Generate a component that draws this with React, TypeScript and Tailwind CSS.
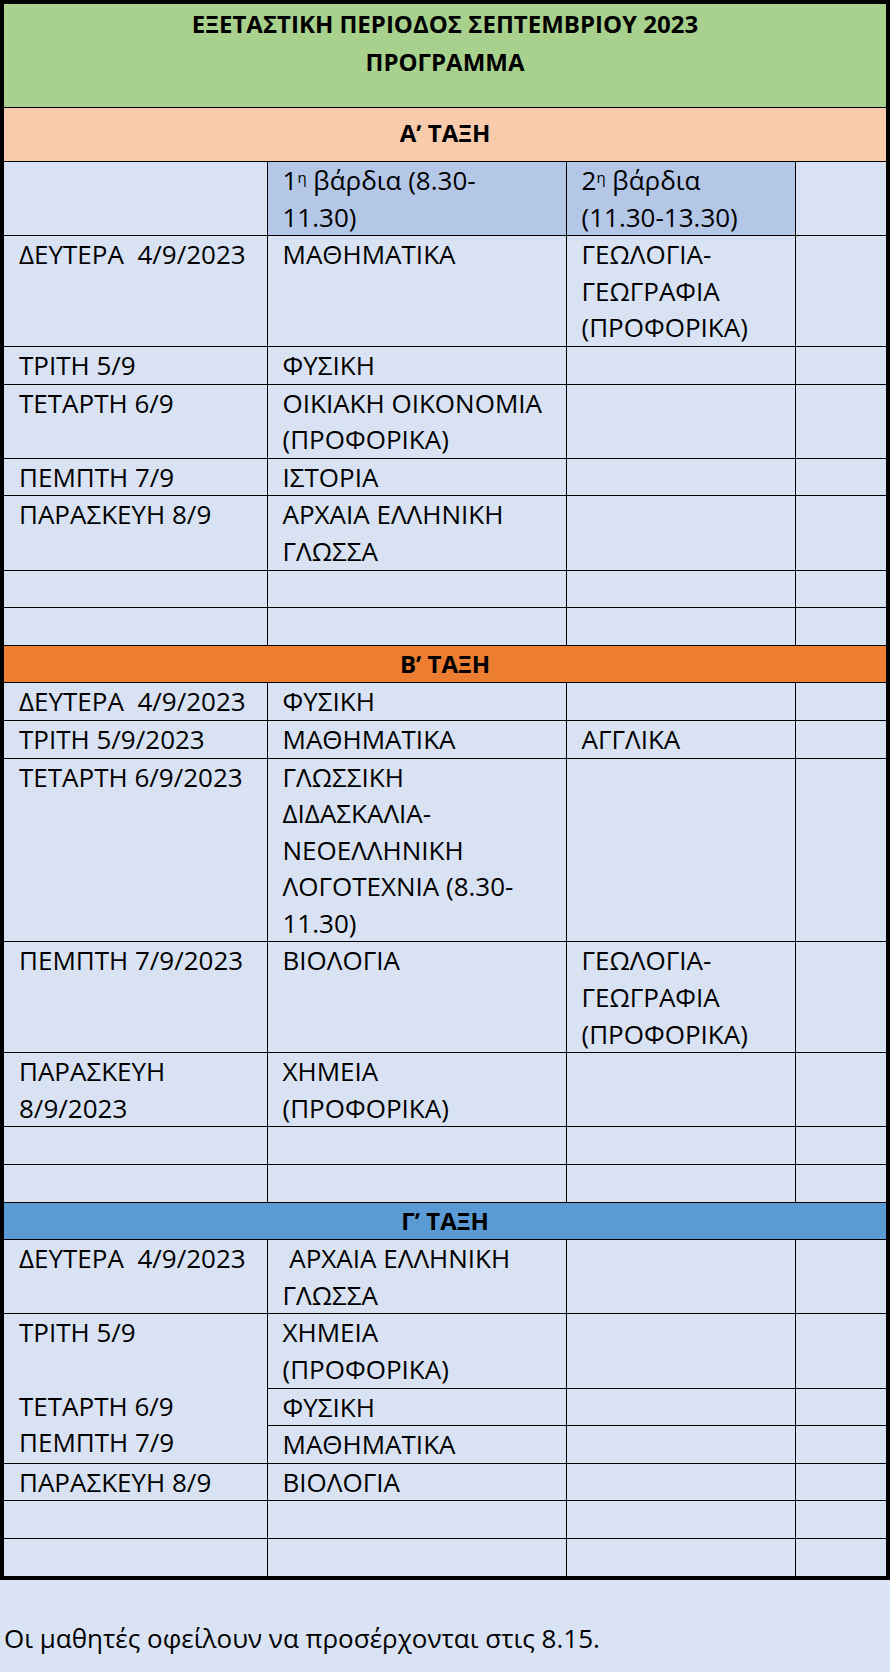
import React from "react";

type Row = {
  day?: string;
  subj?: string;
  second?: string;
  daySpan?: number;
  noDay?: boolean;
};

const sectionA: Row[] = [
  { day: "ΔΕΥΤΕΡΑ  4/9/2023", subj: "ΜΑΘΗΜΑΤΙΚΑ", second: "ΓΕΩΛΟΓΙΑ-\nΓΕΩΓΡΑΦΙΑ\n(ΠΡΟΦΟΡΙΚΑ)" },
  { day: "ΤΡΙΤΗ 5/9", subj: "ΦΥΣΙΚΗ" },
  { day: "ΤΕΤΑΡΤΗ 6/9", subj: "ΟΙΚΙΑΚΗ ΟΙΚΟΝΟΜΙΑ\n(ΠΡΟΦΟΡΙΚΑ)" },
  { day: "ΠΕΜΠΤΗ 7/9", subj: "ΙΣΤΟΡΙΑ" },
  { day: "ΠΑΡΑΣΚΕΥΗ 8/9", subj: "ΑΡΧΑΙΑ ΕΛΛΗΝΙΚΗ\nΓΛΩΣΣΑ" },
  {},
  {},
];

const sectionB: Row[] = [
  { day: "ΔΕΥΤΕΡΑ  4/9/2023", subj: "ΦΥΣΙΚΗ" },
  { day: "ΤΡΙΤΗ 5/9/2023", subj: "ΜΑΘΗΜΑΤΙΚΑ", second: "ΑΓΓΛΙΚΑ" },
  {
    day: "ΤΕΤΑΡΤΗ 6/9/2023",
    subj: "ΓΛΩΣΣΙΚΗ\nΔΙΔΑΣΚΑΛΙΑ-\nΝΕΟΕΛΛΗΝΙΚΗ\nΛΟΓΟΤΕΧΝΙΑ (8.30-\n11.30)",
  },
  { day: "ΠΕΜΠΤΗ 7/9/2023", subj: "ΒΙΟΛΟΓΙΑ", second: "ΓΕΩΛΟΓΙΑ-\nΓΕΩΓΡΑΦΙΑ\n(ΠΡΟΦΟΡΙΚΑ)" },
  { day: "ΠΑΡΑΣΚΕΥΗ\n8/9/2023", subj: "ΧΗΜΕΙΑ\n(ΠΡΟΦΟΡΙΚΑ)" },
  {},
  {},
];

const sectionC: Row[] = [
  { day: "ΔΕΥΤΕΡΑ  4/9/2023", subj: " ΑΡΧΑΙΑ ΕΛΛΗΝΙΚΗ\nΓΛΩΣΣΑ" },
  { day: "ΤΡΙΤΗ 5/9\n\nΤΕΤΑΡΤΗ 6/9\nΠΕΜΠΤΗ 7/9", daySpan: 3, subj: "ΧΗΜΕΙΑ\n(ΠΡΟΦΟΡΙΚΑ)" },
  { noDay: true, subj: "ΦΥΣΙΚΗ" },
  { noDay: true, subj: "ΜΑΘΗΜΑΤΙΚΑ" },
  { day: "ΠΑΡΑΣΚΕΥΗ 8/9", subj: "ΒΙΟΛΟΓΙΑ" },
  {},
  {},
];

const cell = "border border-black align-top bg-[#d9e2f3] p-0";

function Text({ children, className = "" }: { children?: React.ReactNode; className?: string }) {
  return <div className={`whitespace-pre leading-[36.6px] ${className}`}>{children || "\u00a0"}</div>;
}

function Section({ title, color, rows }: { title: string; color: string; rows: Row[] }) {
  return (
    <>
      <tr>
        <td colSpan={4} className={`border border-black p-0 text-center text-[24px] font-bold ${color}`}>
          <Text>{title}</Text>
        </td>
      </tr>
      {rows.map((r, i) => (
        <tr key={i}>
          {!r.noDay && (
            <td rowSpan={r.daySpan} className={cell}>
              <Text className="pl-[15px]">{r.day}</Text>
            </td>
          )}
          <td className={cell}>
            <Text className="pl-[15px]">{r.subj}</Text>
          </td>
          <td className={cell}>
            <Text className="pl-[15px]">{r.second}</Text>
          </td>
          <td className={cell} />
        </tr>
      ))}
    </>
  );
}

export default function App() {
  return (
    <div
      className="w-[890px] min-h-[1672px] bg-[#dae3f3] text-[26px] text-black"
      style={{ fontFamily: '"Open Sans", "Noto Sans", sans-serif' }}
    >
      <table className="w-[890px] table-fixed border-collapse border-[4px] border-black">
        <colgroup>
          <col className="w-[265px]" />
          <col className="w-[299px]" />
          <col className="w-[229px]" />
          <col />
        </colgroup>
        <tbody>
          <tr>
            <td colSpan={4} className="border border-black bg-[#a9d18e] p-0 text-center text-[24px] font-bold">
              <div className="h-[103px] pt-[1px] leading-[38px]">
                ΕΞΕΤΑΣΤΙΚΗ ΠΕΡΙΟΔΟΣ ΣΕΠΤΕΜΒΡΙΟΥ 2023
                <br />
                ΠΡΟΓΡΑΜΜΑ
              </div>
            </td>
          </tr>
          <tr>
            <td colSpan={4} className="border border-black bg-[#f8cbad] p-0 text-center text-[24px] font-bold">
              <div className="h-[53px] pt-[6px] leading-[38px]">Αʹ ΤΑΞΗ</div>
            </td>
          </tr>
          <tr>
            <td className={cell}>
              <Text />
            </td>
            <td className="border border-black bg-[#b4c7e7] p-0 align-top">
              <Text className="pl-[15px]">
                1<sup className="text-[15px]">η</sup> βάρδια (8.30-{"\n"}11.30)
              </Text>
            </td>
            <td className="border border-black bg-[#b4c7e7] p-0 align-top">
              <Text className="pl-[15px]">
                2<sup className="text-[15px]">η</sup> βάρδια{"\n"}(11.30-13.30)
              </Text>
            </td>
            <td className={cell} />
          </tr>
          {sectionA.map((r, i) => (
            <tr key={i}>
              <td className={cell}>
                <Text className="pl-[15px]">{r.day}</Text>
              </td>
              <td className={cell}>
                <Text className="pl-[15px]">{r.subj}</Text>
              </td>
              <td className={cell}>
                <Text className="pl-[15px]">{r.second}</Text>
              </td>
              <td className={cell} />
            </tr>
          ))}
          <Section title="Βʹ ΤΑΞΗ" color="bg-[#ed7d31]" rows={sectionB} />
          <Section title="Γʹ ΤΑΞΗ" color="bg-[#5b9bd5]" rows={sectionC} />
        </tbody>
      </table>
      <p className="mt-[40px] pl-[4px] leading-[36px]">Οι μαθητές οφείλουν να προσέρχονται στις 8.15.</p>
    </div>
  );
}
